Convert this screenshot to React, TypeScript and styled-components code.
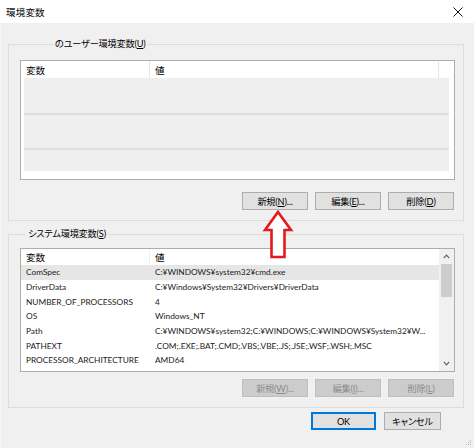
import React from "react";
import styled, { createGlobalStyle } from "styled-components";

const Global = createGlobalStyle`
  html, body { margin: 0; padding: 0; background: #ffffff; }
  body {
    width: 474px; height: 448px; overflow: hidden;
    font-family: "Lato", "Noto Sans CJK JP", sans-serif;
    font-feature-settings: "palt";
    color: #000;
  }
`;

const Window = styled.div`
  position: relative;
  width: 474px;
  height: 448px;
  display: flex;
  flex-direction: column;
  background: #f0f0f0;
`;

const TitleBar = styled.div`
  height: 23px;
  flex: none;
  background: #ffffff;
  display: flex;
  align-items: center;
  justify-content: space-between;
  padding: 0 11px 0 6px;
`;

const Title = styled.span`
  font-size: 9.5px;
  letter-spacing: 0.2px;
`;

const Body = styled.div`
  flex: 1;
  display: flex;
  flex-direction: column;
  padding: 13px 10px 0 8px;
  box-shadow: inset 5px 0 0 -4px #f8f8f8;
`;

const Group = styled.fieldset`
  margin: 0;
  min-inline-size: 0;
  border: 1px solid #dcdcdc;
  padding: 0 8px 10px 11px;
  display: flex;
  flex-direction: column;
  & + & { margin-top: 5px; }
`;

const Legend = styled.legend<{ $offset: number }>`
  margin-left: ${(p) => p.$offset}px;
  padding: 0 2px;
  font-size: 9.2px;
  line-height: 16px;
  letter-spacing: -0.2px;
`;

const List = styled.div<{ $h: number; $gap: number }>`
  margin-top: ${(p) => p.$gap}px;
  height: ${(p) => p.$h}px;
  background: #ffffff;
  border: 1px solid #adadad;
  display: grid;
  grid-template-columns: 1fr 15px;
  overflow: hidden;
  font-size: 9.5px;
`;

const ListMain = styled.div<{ $span?: boolean }>`
  display: flex;
  flex-direction: column;
  min-width: 0;
  grid-column: ${(p) => (p.$span ? "1 / 3" : "1 / 2")};
`;

const Header = styled.div<{ $h: number; $w?: number }>`
  height: ${(p) => p.$h}px;
  display: grid;
  grid-template-columns: 129px ${(p) => (p.$w ? `${p.$w}px` : "1fr")};
  flex: none;
`;

const HeadCell = styled.div<{ $line: string }>`
  display: flex;
  align-items: center;
  padding-left: 5px;
  border-right: 1px solid ${(p) => p.$line};
`;

const BlankRows = styled.div`
  margin: 0 5px 0 3px;
  display: flex;
  flex-direction: column;
`;

const BlankRow = styled.div<{ $h: number }>`
  height: ${(p) => p.$h}px;
  background: #efefef;
  & + & { border-top: 2px solid #dedede; }
`;

const Row = styled.div<{ $sel?: boolean }>`
  height: 14.67px;
  display: grid;
  grid-template-columns: 129px 1fr;
  align-items: center;
  background: ${(p) => (p.$sel ? "#e6e6e6" : "transparent")};
  white-space: nowrap;
  font-size: 8.3px;
  color: #1a1a1a;
`;

const Cell = styled.div`
  padding-left: 5px;
  overflow: hidden;
`;

const ScrollBar = styled.div`
  background: #f0f0f0;
  display: flex;
  flex-direction: column;
  align-items: center;
`;

const ArrowBtn = styled.div`
  height: 15px;
  width: 100%;
  display: flex;
  align-items: center;
  justify-content: center;
  flex: none;
`;

const Track = styled.div`
  flex: 1;
  width: 100%;
  padding: 0 2px;
  box-sizing: border-box;
`;

const Thumb = styled.div`
  height: 33px;
  background: #cdcdcd;
`;

const ButtonRow = styled.div<{ $gap: number; $pr?: number }>`
  margin-top: ${(p) => p.$gap}px;
  display: flex;
  justify-content: flex-end;
  gap: 7px;
  padding-right: ${(p) => p.$pr ?? 1}px;
`;

const Button = styled.div<{ $w?: number; $disabled?: boolean; $default?: boolean }>`
  width: ${(p) => p.$w ?? 66}px;
  height: 18px;
  box-sizing: border-box;
  display: flex;
  align-items: center;
  justify-content: center;
  font-size: 9.2px;
  letter-spacing: -0.2px;
  background: ${(p) => (p.$disabled ? "#cccccc" : "#e1e1e1")};
  color: ${(p) => (p.$disabled ? "#8c8c8c" : "#000")};
  border: ${(p) => (p.$default ? "2px solid #0078d7" : p.$disabled ? "1px solid #bfbfbf" : "1px solid #adadad")};
`;

const DialogButtons = styled(ButtonRow)`
  margin-top: 4px;
  gap: 8px;
`;

const ArrowOverlay = styled.svg`
  position: absolute;
  left: 262px;
  top: 209px;
`;

const Grip = styled.svg`
  position: absolute;
  right: 2px;
  bottom: 2px;
`;

const Chevron = ({ up }: { up?: boolean }) => (
  <svg width="7" height="5" viewBox="0 0 7 5">
    <path
      d={up ? "M0.8 4.2 L3.5 1.2 L6.2 4.2" : "M0.8 0.8 L3.5 3.8 L6.2 0.8"}
      fill="none"
      stroke="#606060"
      strokeWidth="1.2"
    />
  </svg>
);

const sysVars: [string, string][] = [
  ["ComSpec", "C:¥WINDOWS¥system32¥cmd.exe"],
  ["DriverData", "C:¥Windows¥System32¥Drivers¥DriverData"],
  ["NUMBER_OF_PROCESSORS", "4"],
  ["OS", "Windows_NT"],
  ["Path", "C:¥WINDOWS¥system32;C:¥WINDOWS;C:¥WINDOWS¥System32¥W..."],
  ["PATHEXT", ".COM;.EXE;.BAT;.CMD;.VBS;.VBE;.JS;.JSE;.WSF;.WSH;.MSC"],
  ["PROCESSOR_ARCHITECTURE", "AMD64"],
];

export default function App() {
  return (
    <Window>
      <Global />
      <TitleBar>
        <Title>環境変数</Title>
        <svg width="10" height="10" viewBox="0 0 10 10">
          <path d="M0.5 0.5 L9.5 9.5 M9.5 0.5 L0.5 9.5" stroke="#111" strokeWidth="1" />
        </svg>
      </TitleBar>
      <Body>
        <Group>
          <Legend $offset={33}>
            のユーザー環境変数(<u>U</u>)
          </Legend>
          <List $h={118} $gap={8}>
            <ListMain $span>
              <Header $h={17} $w={289}>
                <HeadCell $line="#e5e5e5">変数</HeadCell>
                <HeadCell $line="#e5e5e5">値</HeadCell>
              </Header>
              <BlankRows>
                <BlankRow $h={35} />
                <BlankRow $h={33} />
                <BlankRow $h={21} />
              </BlankRows>
            </ListMain>
          </List>
          <ButtonRow $gap={12}>
            <Button>
              新規(<u>N</u>)...
            </Button>
            <Button>
              編集(<u>E</u>)...
            </Button>
            <Button>
              削除(<u>D</u>)
            </Button>
          </ButtonRow>
        </Group>
        <Group>
          <Legend $offset={6}>
            システム環境変数(<u>S</u>)
          </Legend>
          <List $h={122} $gap={6}>
            <ListMain>
              <Header $h={16}>
                <HeadCell $line="#f0f0f0">変数</HeadCell>
                <HeadCell $line="transparent">値</HeadCell>
              </Header>
              {sysVars.map(([k, v], i) => (
                <Row key={k} $sel={i === 0}>
                  <Cell>{k}</Cell>
                  <Cell>{v}</Cell>
                </Row>
              ))}
            </ListMain>
            <ScrollBar>
              <ArrowBtn>
                <Chevron up />
              </ArrowBtn>
              <Track>
                <Thumb />
              </Track>
              <ArrowBtn>
                <Chevron />
              </ArrowBtn>
            </ScrollBar>
          </List>
          <ButtonRow $gap={7}>
            <Button $disabled>
              新規(<u>W</u>)...
            </Button>
            <Button $disabled>
              編集(<u>I</u>)...
            </Button>
            <Button $disabled>
              削除(<u>L</u>)
            </Button>
          </ButtonRow>
        </Group>
        <DialogButtons $gap={4} $pr={23}>
          <Button $default $w={65}>
            OK
          </Button>
          <Button $w={57}>キャンセル</Button>
        </DialogButtons>
      </Body>
      <ArrowOverlay width="32" height="52" viewBox="0 0 32 52">
        <polygon
          points="16,3 29,21 22.5,21 22.5,48 9.5,48 9.5,21 3,21"
          fill="#ffffff"
          stroke="#e3191c"
          strokeWidth="2.6"
          strokeLinejoin="miter"
        />
      </ArrowOverlay>
      <Grip width="6" height="6" viewBox="0 0 6 6">
        <rect x="4" y="0" width="1" height="1" fill="#bdbdbd" />
        <rect x="2" y="2" width="1" height="1" fill="#bdbdbd" />
        <rect x="4" y="2" width="1" height="1" fill="#bdbdbd" />
        <rect x="0" y="4" width="1" height="1" fill="#bdbdbd" />
        <rect x="2" y="4" width="1" height="1" fill="#bdbdbd" />
        <rect x="4" y="4" width="1" height="1" fill="#bdbdbd" />
      </Grip>
    </Window>
  );
}
